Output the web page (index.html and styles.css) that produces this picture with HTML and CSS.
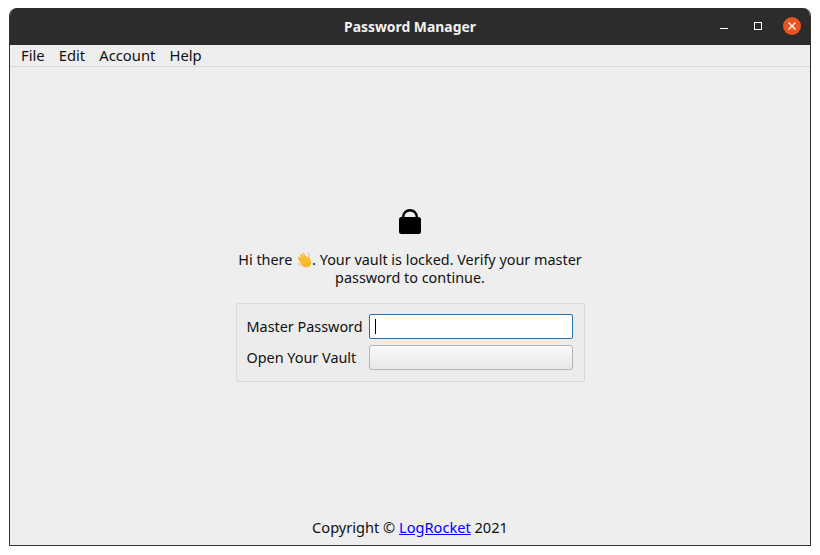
FILE: index.html
```html
<!DOCTYPE html>
<html lang="en">
<head>
  <meta charset="UTF-8" />
  <title>Password Manager</title>
  <link rel="stylesheet" href="styles.css">
</head>
<body>

<div class="window">
  <div class="titlebar">
    <span class="title">Password Manager</span>
    <div class="controls">
      <svg class="control" width="16" height="16" viewBox="0 0 16 16"><path d="M4 10.500h8" stroke="#fff" stroke-width="1"/></svg>
      <svg class="control" width="16" height="16" viewBox="0 0 16 16"><rect x="4.500" y="4.500" width="7" height="7" fill="none" stroke="#fff"/></svg>
      <svg class="control close" width="18" height="18" viewBox="0 0 18 18"><circle cx="9" cy="9" r="9" fill="#e95420"/><path d="M5.500 5.500l7 7M12.500 5.500l-7 7" stroke="#fff" stroke-width="1.300"/></svg>
    </div>
  </div>

  <div class="menubar">
    <span class="menu-item">File</span>
    <span class="menu-item">Edit</span>
    <span class="menu-item">Account</span>
    <span class="menu-item">Help</span>
  </div>

  <div class="content">
    <svg class="lock" width="24" height="26" viewBox="0 0 24 26">
      <path d="M5.200 12V8a6.800 6.800 0 0 1 13.600 0v4" fill="none" stroke="#000" stroke-width="2.400"/>
      <rect x="1" y="8" width="22" height="17" rx="2.500" fill="#000"/>
    </svg>
    <p class="message">Hi there <svg class="wave" width="16" height="16" viewBox="0 0 16 16"><path d="M2 6.500l3.500 6.500c1.200 2.300 4.500 3 7 2s3.400-3.500 2.300-6L13 4.500c-.5-1-1.800-.6-1.600.5l.3 1.500L8 1.500c-.6-.9-1.900-.3-1.400.7L8.500 5.500 5.500 2.300c-.8-.8-2 0-1.300 1L6.500 7 4 4.700c-.9-.8-2.400.5-2 1.800z" fill="#fbb92d"/><path d="M11.500 1.500c1 .2 1.800 1 2.200 2M2.500 11c.3 1 .9 1.800 1.800 2.300" fill="none" stroke="#9fa8ad" stroke-width=".8"/></svg>. Your vault is locked. Verify your master<br>password to continue.</p>

    <div class="form-box">
      <div class="form-row">
        <label class="form-label">Master Password</label>
        <div class="text-input"><span class="caret"></span></div>
      </div>
      <div class="form-row">
        <label class="form-label">Open Your Vault</label>
        <button class="push-button" type="button"></button>
      </div>
    </div>

    <p class="copyright">Copyright © <a href="#">LogRocket</a> 2021</p>
  </div>
</div>

</body>
</html>
```

FILE: styles.css
```css
html, body {
  height: 100%;
}
body {
  margin: 0;
  background-color: white;
  font-family: "Noto Sans", "Open Sans", sans-serif;
  font-size: 14.4px;
  color: #111;
  padding: 8px 9px 9px 9px;
  box-sizing: border-box;
}
.window {
  height: 100%;
  display: flex;
  flex-direction: column;
  background-color: #eeeeee;
  border-radius: 8px 8px 0 0;
  border: 1px solid #333;
  border-top: none;
  box-sizing: border-box;
  overflow: hidden;
}
.titlebar {
  height: 37px;
  flex: none;
  background-color: #2c2c2c;
  color: #f2f2f2;
  display: flex;
  align-items: center;
  justify-content: center;
  position: relative;
}
.title {
  font-weight: bold;
  font-size: 13.9px;
}
.controls {
  position: absolute;
  right: 9px;
  top: 9px;
  display: flex;
  align-items: center;
  gap: 18px;
}
.control {
  display: block;
}
.close {
  margin-left: -1px;
}
.menubar {
  height: 19px;
  flex: none;
  display: flex;
  align-items: center;
  gap: 14px;
  padding: 0 0 2px 11px;
  font-size: 14.8px;
  border-bottom: 1px solid #d8d8d8;
}
.content {
  flex: 1;
  display: flex;
  flex-direction: column;
  align-items: center;
  padding-top: 142px;
}
.lock {
  display: block;
}
.message {
  margin: 16px 0 0 0;
  text-align: center;
  line-height: 18px;
}
.wave {
  vertical-align: -3px;
}
.form-box {
  margin-top: 16px;
  width: 349px;
  height: 79px;
  box-sizing: border-box;
  border: 1px solid #d9d9d9;
  border-radius: 2px;
  background-color: #ececec;
  padding: 10px 11px 0 10px;
  display: flex;
  flex-direction: column;
  gap: 6px;
}
.form-row {
  display: flex;
  align-items: center;
  justify-content: space-between;
}
.form-label {
  white-space: nowrap;
}
.text-input {
  width: 204px;
  height: 25px;
  box-sizing: border-box;
  background-color: white;
  border: 1px solid #2a6fa8;
  border-radius: 2px;
  display: flex;
  align-items: center;
  padding-left: 5px;
}
.caret {
  width: 1px;
  height: 15px;
  background-color: #000;
}
.push-button {
  width: 204px;
  height: 25px;
  box-sizing: border-box;
  padding: 0;
  border: 1px solid #b4b4b4;
  border-radius: 3px;
  background: linear-gradient(#fafafa, #e8e8e8);
}
.copyright {
  margin: auto 0 9px 0;
  font-size: 14.6px;
  line-height: 18px;
}
.copyright a {
  color: #0000ff;
}
```
